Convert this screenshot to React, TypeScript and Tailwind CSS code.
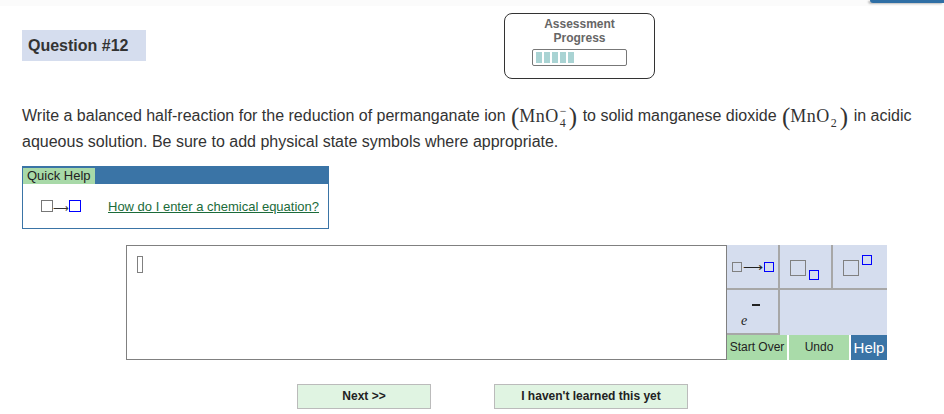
import React from "react";

const serif = { fontFamily: '"Liberation Serif", "Times New Roman", serif' };

export default function App() {
  return (
    <div className="relative w-[944px] h-[414px] bg-white overflow-hidden text-[#333]" style={{ fontFamily: '"Liberation Sans", Arial, sans-serif' }}>
      <div className="h-[6px] bg-[#fbfbfb]" />
      <div className="absolute right-0 top-0 w-[74px] h-[3px] bg-[#2f6fa5] rounded-bl-[4px] shadow-[-2px_1px_2px_rgba(0,0,0,0.25)]" />
      {/* header */}
      <div className="flex items-start pl-[22px]">
        <div className="mt-[24px] w-[124px] h-[31px] bg-[#d5ddee] flex items-center pl-[6px] text-[16px] font-bold text-[#333]">Question #12</div>
        <div className="ml-[358px] mt-[7px] w-[151px] h-[66px] border border-[#333] rounded-[8px] flex flex-col items-center pt-[3px]">
          <div className="text-[12px] leading-[14px] font-bold text-[#666] text-center">Assessment<br />Progress</div>
          <div className="mt-[4px] w-[95px] h-[17px] border border-[#777] rounded-[2px] flex items-center gap-[2px] pl-[3px]">
            {[0, 1, 2, 3, 4].map((i) => (
              <span key={i} className="w-[6px] h-[11px] bg-[#a9d3d3]" />
            ))}
          </div>
        </div>
      </div>
      {/* question text */}
      <div className="mt-[24px] pl-[22px] pr-[18px] text-[16px] leading-[25px] text-[#333]">
        Write a balanced half-reaction for the reduction of permanganate ion{" "}
        <span className="inline-flex items-center align-middle h-[25px] mx-[1px]" style={serif}>
          <span className="text-[25px] leading-[25px] font-light">(</span>
          <span className="text-[18px] leading-[25px] tracking-[0.5px]">MnO</span>
          <span className="relative inline-block w-[10px] h-[25px] text-[12px] leading-[12px]">
            <span className="absolute left-[1px] top-[1px]">−</span>
            <span className="absolute left-[1px] top-[13px]">4</span>
          </span>
          <span className="text-[25px] leading-[25px] font-light">)</span>
        </span>{" "}
        to solid manganese dioxide{" "}
        <span className="inline-flex items-center align-middle h-[25px] mx-[1px]" style={serif}>
          <span className="text-[25px] leading-[25px] font-light">(</span>
          <span className="text-[18px] leading-[25px] tracking-[0.5px]">MnO</span>
          <span className="relative inline-block w-[10px] h-[25px] text-[12px] leading-[12px]">
            <span className="absolute left-[1px] top-[13px]">2</span>
          </span>
          <span className="text-[25px] leading-[25px] font-light">)</span>
        </span>{" "}
        in acidic aqueous solution. Be sure to add physical state symbols where appropriate.
      </div>
      {/* quick help */}
      <div className="ml-[22px] mt-[12px] w-[307px] h-[63px] border border-[#3a74a6]">
        <div className="h-[17px] bg-[#3a74a6] flex items-end">
          <div className="h-[16px] px-[4px] bg-[#a8d9a8] text-[13px] leading-[16px] text-[#222]">Quick Help</div>
        </div>
        <div className="flex items-center h-[44px] pl-[18px]">
          <span className="flex items-center">
            <span className="inline-block w-[12px] h-[12px] border border-[#777]" />
            <span className="text-[11px] leading-[10px] mt-[4px]">⟶</span>
            <span className="inline-block w-[12px] h-[12px] border border-[#00f]" />
          </span>
          <a className="ml-[27px] text-[13px] text-[#1b6b3a] underline">How do I enter a chemical equation?</a>
        </div>
      </div>
      {/* input + palette */}
      <div className="flex ml-[126px] mt-[16px]">
        <div className="w-[601px] h-[115px] border border-[#808080] pl-[10px] pt-[10px]">
          <span className="block w-[6px] h-[17px] border border-[#808080]" />
        </div>
        <div className="w-[160px] h-[115px] bg-[#d5ddee] flex flex-col">
          <div className="flex h-[45px]">
            <div className="w-[53px] border-r-2 border-b-2 border-[#a7a7a7] flex items-center justify-center gap-[1px]">
              <span className="inline-block w-[10px] h-[10px] border border-[#808080]" />
              <span className="text-[14px] leading-[14px] text-[#222]">⟶</span>
              <span className="inline-block w-[10px] h-[10px] border-[1.5px] border-[#00f]" />
            </div>
            <div className="w-[53px] border-r-2 border-b-2 border-[#a7a7a7] relative">
              <span className="absolute left-[10px] top-[15px] w-[16px] h-[16px] border-[1.5px] border-[#808080]" />
              <span className="absolute left-[29px] top-[25px] w-[10px] h-[10px] border-[1.5px] border-[#00f]" />
            </div>
            <div className="w-[54px] border-b-2 border-[#a7a7a7] relative">
              <span className="absolute left-[10px] top-[15px] w-[16px] h-[16px] border-[1.5px] border-[#808080]" />
              <span className="absolute left-[29px] top-[10px] w-[10px] h-[10px] border-[1.5px] border-[#00f]" />
            </div>
          </div>
          <div className="flex h-[45px]">
            <div className="w-[53px] border-r-2 border-b-2 border-[#a7a7a7] relative" style={serif}>
              <span className="absolute left-[14px] top-[20px] text-[14px] italic text-[#222]">e</span>
              <span className="absolute left-[25px] top-[14px] w-[8px] h-[1.5px] bg-[#222]" />
            </div>
          </div>
          <div className="flex h-[25px] bg-white gap-[2px]">
            <div className="w-[60px] bg-[#a9dba9] text-[12px] leading-[25px] text-center text-[#222]">Start Over</div>
            <div className="w-[60px] bg-[#a9dba9] text-[12px] leading-[25px] text-center text-[#222]">Undo</div>
            <div className="w-[36px] bg-[#3a74a6] text-[15px] leading-[25px] text-center text-white">Help</div>
          </div>
        </div>
      </div>
      {/* buttons */}
      <div className="flex mt-[24px] ml-[297px] gap-[63px]">
        <div className="w-[134px] h-[25px] bg-[#e0f4e2] border border-[#bbb] text-[12px] font-bold text-center leading-[23px] text-[#222]">Next &gt;&gt;</div>
        <div className="w-[194px] h-[25px] bg-[#e0f4e2] border border-[#bbb] text-[12px] font-bold text-center leading-[23px] text-[#222]">I haven't learned this yet</div>
      </div>
    </div>
  );
}
